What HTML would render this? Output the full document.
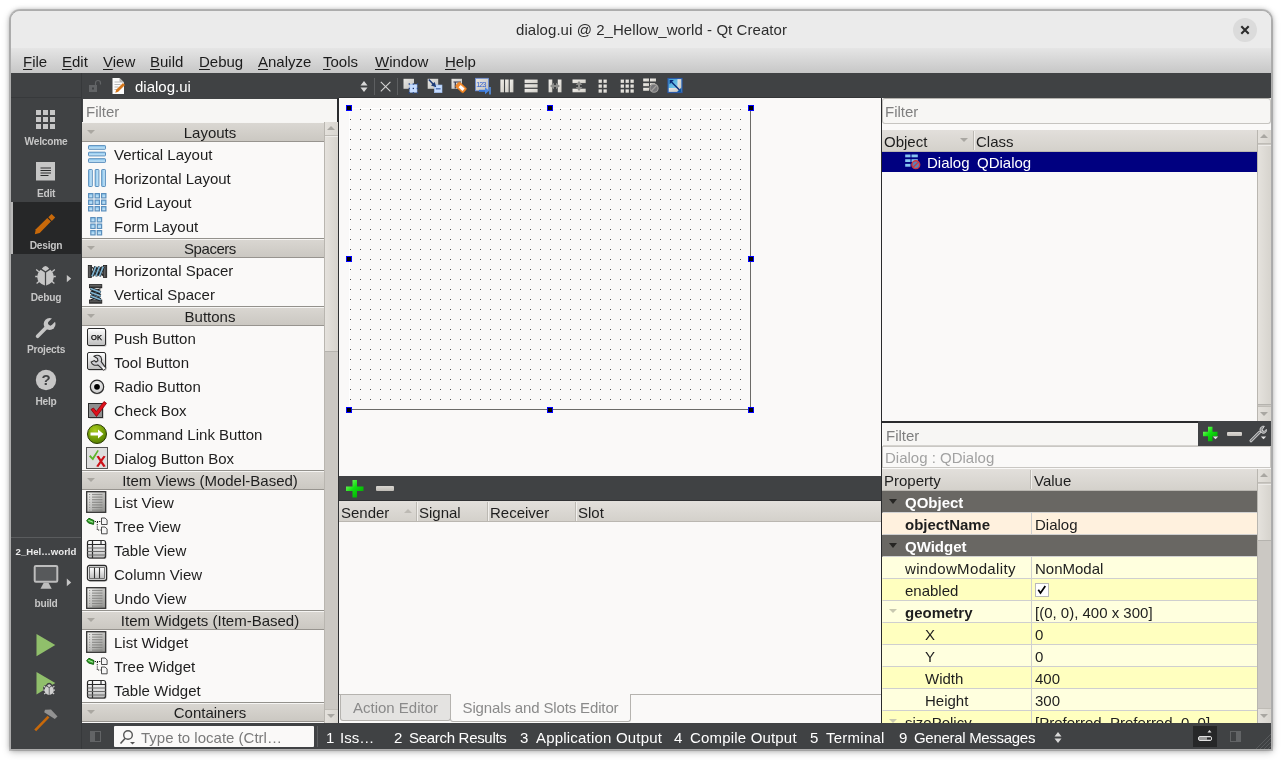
<!DOCTYPE html>
<html lang="en">
<head>
<meta charset="utf-8">
<title>dialog.ui @ 2_Hellow_world - Qt Creator</title>
<style>
*{box-sizing:border-box;margin:0;padding:0}
html,body{width:1282px;height:760px;overflow:hidden;background:#fff}
body{position:relative;will-change:transform;font-family:"Liberation Sans",sans-serif;font-size:15px;color:#1e1e1e;line-height:1}
.abs{position:absolute}
#frame{position:absolute;left:10px;top:10px;width:1262px;height:740px;border:1px solid #acacac;border-radius:10px 10px 0 0;background:#ebebeb;box-shadow:0 0 0 1px rgba(0,0,0,.16),0 2px 9px rgba(0,0,0,.22),0 0 5px rgba(0,0,0,.28)}
#title{position:absolute;left:11px;top:11px;width:1260px;height:37px;border-radius:9px 9px 0 0;background:#ebebeb;text-align:center;line-height:38px;font-size:15px;color:#2d2d2d;letter-spacing:.06px;padding-left:21px}
#close{position:absolute;left:1233px;top:18px;width:24px;height:24px;border-radius:12px;background:#dbdbdb}
#menubar{position:absolute;left:11px;top:48px;width:1260px;height:25px;background:linear-gradient(#e5e5e5,#dcdcdc 30%,#c7c7c7)}
#menubar span{position:absolute;top:6px;font-size:15px;color:#1c1c1c;white-space:nowrap}
#menubar u{text-decoration:underline;text-underline-offset:2px;text-decoration-thickness:1px}
#dark{position:absolute;left:11px;top:73px;width:1260px;height:676px;background:#404244}
/* mode bar */
.ml{position:absolute;left:11px;width:70px;text-align:center;font-size:10.200px;font-weight:bold;color:#c6c6c6;letter-spacing:-.25px;line-height:12px;white-space:nowrap}
.panel{position:absolute;background:#faf9f8}
.ph{color:#7f7f7f}
/* widget box */
.cat{position:absolute;left:82px;width:242px;padding-left:14px;height:20px;background:linear-gradient(#dad7d2,#cbc8c2);border-bottom:1px solid #97948f;border-top:1px solid #93918c;box-shadow:inset 0 1px 0 #f6f5f3;text-align:center;font-size:15px;line-height:19px;color:#1e1e1e}
.cat.first{border-top-color:#f6f5f3;box-shadow:none}
.cat i{position:absolute;left:5px;top:7px;width:0;height:0;border-left:4px solid transparent;border-right:4px solid transparent;border-top:4px solid #aaa7a1}
.it{position:absolute;left:114px;font-size:15px;line-height:24px;height:24px;white-space:nowrap;color:#1e1e1e}
.ic{position:absolute;left:86px;width:22px;height:22px}
.hdr{position:absolute;height:21px;background:linear-gradient(#e2dfdb,#d4d1cb);border-bottom:1px solid #bab7b1;font-size:15px;line-height:21px;white-space:nowrap;color:#1e1e1e}
.hdr span{position:absolute;top:1px}
.sbh{background:linear-gradient(90deg,#e5e2dd,#d6d3cd);border-bottom:1px solid #b5b3ae;border-top:1px solid #eceae7}
.sbb{background:linear-gradient(90deg,#e4e1dc,#d8d5cf)}
.hdr em{position:absolute;top:1px;width:1px;height:19px;background:#bcb9b3;border-right:1px solid #f1efec;box-sizing:content-box}
.sb{position:absolute;width:14px;background:#cbc8c3;border-left:1px solid #b9b6b0}
.row{position:absolute;left:882px;width:375px;border-left:1px solid transparent;height:22px;font-size:15px;line-height:21px;border-bottom:1px solid #cfcfcf;white-space:nowrap}
.row span{position:absolute;top:1px}
.row .v{left:152px}
.row em{position:absolute;left:148px;top:0;width:1px;height:21px;background:#cfcfcf}
.grp{background:#696763;color:#fff;font-weight:bold;border-bottom:1px solid #d2d2d2}
.out{position:absolute;top:728px;font-size:15px;color:#fff;white-space:nowrap;line-height:19px}
</style>
</head>
<body>
<div id="frame"></div>
<div id="title">dialog.ui @ 2_Hellow_world - Qt Creator</div>
<div id="close"><svg width="24" height="24" viewBox="0 0 24 24"><path d="M8.3 8.3l7.4 7.4M15.7 8.3l-7.4 7.4" stroke="#2b2b2b" stroke-width="2.1" fill="none"/></svg></div>
<div id="menubar">
<span style="left:12px"><u>F</u>ile</span>
<span style="left:51px"><u>E</u>dit</span>
<span style="left:92px"><u>V</u>iew</span>
<span style="left:139px"><u>B</u>uild</span>
<span style="left:188px"><u>D</u>ebug</span>
<span style="left:247px"><u>A</u>nalyze</span>
<span style="left:312px"><u>T</u>ools</span>
<span style="left:364px"><u>W</u>indow</span>
<span style="left:434px"><u>H</u>elp</span>
</div>
<div id="dark"></div>
<div class="abs" style="left:11px;top:97px;width:70px;height:1px;background:#37393b"></div>
<div class="abs" style="left:81px;top:73px;width:1px;height:676px;background:#37393b"></div>
<svg class="abs" style="left:35px;top:109px" width="22" height="22" viewBox="0 0 22 22"><rect x="1" y="1" width="5" height="5" fill="#c6c6c6"/><rect x="1" y="8" width="5" height="5" fill="#c6c6c6"/><rect x="1" y="15" width="5" height="5" fill="#c6c6c6"/><rect x="8" y="1" width="5" height="5" fill="#c6c6c6"/><rect x="8" y="8" width="5" height="5" fill="#c6c6c6"/><rect x="8" y="15" width="5" height="5" fill="#c6c6c6"/><rect x="15" y="1" width="5" height="5" fill="#c6c6c6"/><rect x="15" y="8" width="5" height="5" fill="#c6c6c6"/><rect x="15" y="15" width="5" height="5" fill="#c6c6c6"/></svg>
<div class="ml" style="top:136px;">Welcome</div>
<svg class="abs" style="left:35px;top:160px" width="22" height="22" viewBox="0 0 22 22"><rect x="1" y="2" width="19" height="18.500" fill="#c6c6c6"/><path d="M5.500 8h10.500M5.500 10.500h10.500M5.500 13h10.500M5.500 15.500h8" stroke="#2c2d2e" stroke-width="1.100"/></svg>
<div class="ml" style="top:188px;">Edit</div>
<div class="abs" style="left:11px;top:202px;width:70px;height:52px;background:#262728"></div><div class="abs" style="left:11px;top:202px;width:2px;height:52px;background:#b9b9b9"></div>
<svg class="abs" style="left:33px;top:211px" width="26" height="26" viewBox="0 0 26 26"><path d="M14.300 7.100l3.600 3.500L6.700 21.900l-4.900 1.400 1-5z" fill="#c8690a"/><path d="M15.300 6.300l3.300-3.400 3.600 3.600-3.400 3.400z" fill="#c8690a"/></svg>
<div class="ml" style="top:240px;">Design</div>
<svg class="abs" style="left:32px;top:262px" width="28" height="28" viewBox="0 0 28 28"><g stroke="#c6c6c6" stroke-width="1.300" fill="none"><path d="M4.200 7.500l2.600 2.200M3.200 14.500h2.600M4.600 21.500l2.600-2.200M22.800 7.500l-2.600 2.200M23.800 14.500h-2.600M22.400 21.500l-2.600-2.200"/></g><path d="M9.800 6.800Q13.500 1 17.200 6.800L13.500 9.200z" fill="#c6c6c6"/><path d="M12.900 10.400L8.700 7.700Q5.300 10.200 5.300 15.300Q5.300 21.300 12.900 23.400z" fill="#c6c6c6"/><path d="M14.100 10.400l4.200-2.700Q21.700 10.200 21.700 15.300Q21.700 21.300 14.100 23.400z" fill="#c6c6c6"/></svg>
<svg class="abs" style="left:66px;top:274px" width="6" height="9" viewBox="0 0 6 9"><path d="M.8 .9l4.400 3.700-4.400 3.700z" fill="#c6c6c6"/></svg>
<div class="ml" style="top:292px;">Debug</div>
<svg class="abs" style="left:32px;top:314px" width="28" height="28" viewBox="0 0 28 28"><path d="M5.600 22.200L15 12.800" stroke="#c6c6c6" stroke-width="3.700" stroke-linecap="round"/><circle cx="17.600" cy="10" r="5.900" fill="#c6c6c6"/><path d="M18.400 9.200l6 -6" stroke="#404244" stroke-width="4.600" stroke-linecap="round"/></svg>
<div class="ml" style="top:344px;">Projects</div>
<svg class="abs" style="left:35px;top:369px" width="22" height="22" viewBox="0 0 22 22"><circle cx="11" cy="11" r="10.200" fill="#c6c6c6"/><text x="11" y="16.400" text-anchor="middle" font-family="Liberation Sans, sans-serif" font-weight="bold" font-size="15" fill="#404244">?</text></svg>
<div class="ml" style="top:396px;">Help</div>
<div class="abs" style="left:11px;top:537px;width:70px;height:1px;background:#5a5c5e"></div>
<div class="ml" style="top:546px;font-size:9.600px;color:#ececec;letter-spacing:0;font-weight:bold">2_Hel…world</div>
<svg class="abs" style="left:32px;top:563px" width="28" height="28" viewBox="0 0 28 28"><rect x="2.700" y="2.900" width="22.600" height="15.800" rx="1.200" fill="#57595b" stroke="#bdbdbd" stroke-width="2"/><path d="M11.700 19.700h4.800l3.200 6.100H8.500z" fill="#bdbdbd"/></svg>
<svg class="abs" style="left:66px;top:578px" width="6" height="9" viewBox="0 0 6 9"><path d="M.8 .6l4.400 3.800-4.400 3.800z" fill="#c6c6c6"/></svg>
<div class="ml" style="top:598px;">build</div>
<svg class="abs" style="left:34px;top:632px" width="24" height="26" viewBox="0 0 24 26"><path d="M2.500 2L21.300 13 2.500 24.200z" fill="#90bf6b"/></svg>
<svg class="abs" style="left:34px;top:670px" width="26" height="28" viewBox="0 0 26 28"><path d="M2.500 2.100L21.300 13 2.500 24.400z" fill="#90bf6b"/><g transform="translate(7.600,12) scale(.56)"><path d="M9.800 6.800Q13.500 1 17.200 6.800L13.500 9.200zM12.900 10.400L8.700 7.700Q5.300 10.200 5.300 15.300Q5.300 21.300 12.900 23.400zM14.100 10.400l4.200-2.700Q21.700 10.200 21.700 15.300Q21.700 21.300 14.100 23.400z" fill="#404244" stroke="#404244" stroke-width="5"/><path d="M4.200 7.500l2.600 2.200M3.200 14.500h2.600M4.600 21.500l2.600-2.200M22.800 7.500l-2.600 2.200M23.800 14.500h-2.600M22.400 21.500l-2.600-2.200" stroke="#404244" stroke-width="5.500"/><g stroke="#d0d0d0" stroke-width="2" fill="none"><path d="M4.200 7.500l2.600 2.200M3.200 14.500h2.600M4.600 21.500l2.600-2.200M22.800 7.500l-2.600 2.200M23.800 14.500h-2.600M22.400 21.500l-2.600-2.200"/></g><path d="M9.800 6.800Q13.500 1 17.200 6.800L13.500 9.200z" fill="#d0d0d0"/><path d="M12.900 10.400L8.700 7.700Q5.300 10.200 5.300 15.300Q5.300 21.300 12.900 23.400z" fill="#d0d0d0"/><path d="M14.100 10.400l4.200-2.700Q21.700 10.200 21.700 15.300Q21.700 21.300 14.100 23.400z" fill="#d0d0d0"/></g></svg>
<svg class="abs" style="left:32px;top:706px" width="28" height="28" viewBox="0 0 28 28"><path d="M3.200 24.400L16.500 10.600" stroke="#c8690a" stroke-width="2.600"/><path d="M12.200 6.300l.8-2.600 6-.1 6.500 6.800-2.700 2.600z" fill="#929292"/></svg>

<svg class="abs" style="left:88px;top:79px" width="14" height="14" viewBox="0 0 14 14"><rect x="1" y="6" width="8" height="7" fill="#626466"/><rect x="4" y="8.500" width="2" height="2" fill="#404244"/><path d="M7.500 6V4a2.500 2.500 0 0 1 5 0v1.500" stroke="#626466" stroke-width="1.200" fill="none"/></svg>
<svg class="abs" style="left:111px;top:77px" width="16" height="18" viewBox="0 0 16 18"><path d="M1.500 1h7l4.500 4.500v11.500h-11.500z" fill="#fbfbfb"/><path d="M8.500 1l4.500 4.500h-4.500z" fill="#b5b5b5"/><path d="M3.500 5h5M3.500 7.500h6M3.500 10h4M3.500 12.500h3" stroke="#b9b9b9" stroke-width="1"/><path d="M4.300 15.800l.9-3 6.800-6.800 2 2-6.800 6.800z" fill="#d4761b"/></svg>
<div class="abs" style="left:135px;top:77px;font-size:15px;color:#fff;line-height:19px">dialog.ui</div>
<svg class="abs" style="left:360px;top:80px" width="8" height="13" viewBox="0 0 8 13"><path d="M.5 5.500l3.500-4.500 3.500 4.500zM.5 7.500l3.500 4.500 3.500-4.500z" fill="#d8d8d8"/></svg>
<div class="abs" style="left:374px;top:78px;width:1px;height:17px;background:#5d5f61"></div>
<svg class="abs" style="left:379px;top:80px" width="13" height="13" viewBox="0 0 13 13"><path d="M1.800 1.800l9.600 9.600M11.400 1.800l-9.600 9.600" stroke="#d4d4d4" stroke-width="1.100"/></svg>
<div class="abs" style="left:397px;top:78px;width:1px;height:17px;background:#5d5f61"></div>

<svg width="0" height="0" style="position:absolute"><defs><linearGradient id="gcr" x1="0" y1="0" x2="1" y2="1"><stop offset="0" stop-color="#f4f2ee"/><stop offset="1" stop-color="#cfccc5"/></linearGradient><linearGradient id="ggr" x1="0" y1="0" x2="1" y2="1"><stop offset="0" stop-color="#e9e8e5"/><stop offset="1" stop-color="#c2c1bd"/></linearGradient><linearGradient id="gadj" x1="0" y1="0" x2="1" y2="1"><stop offset="0" stop-color="#3aa0d8"/><stop offset="1" stop-color="#a5e0f4"/></linearGradient></defs></svg>
<svg class="abs" style="left:402px;top:76px" width="20" height="20" viewBox="0 0 20 20"><rect x="1.500" y="2.800" width="10.500" height="10" fill="url(#ggr)"/><rect x="7.800" y="8.500" width="7.200" height="7.800" fill="#c5dcff" stroke="#9ebef0" stroke-width=".6"/><rect x="10.700" y="11.800" width="1.300" height="1.300" fill="#1b2f63"/><rect x="6.6" y="7.3" width="1.400" height="1.400" fill="#2a4a8c"/><rect x="10.7" y="7.3" width="1.400" height="1.400" fill="#2a4a8c"/><rect x="14.8" y="7.3" width="1.400" height="1.400" fill="#2a4a8c"/><rect x="6.6" y="11.8" width="1.400" height="1.400" fill="#2a4a8c"/><rect x="14.8" y="11.8" width="1.400" height="1.400" fill="#2a4a8c"/><rect x="6.6" y="16.2" width="1.400" height="1.400" fill="#2a4a8c"/><rect x="10.7" y="16.2" width="1.400" height="1.400" fill="#2a4a8c"/><rect x="14.8" y="16.2" width="1.400" height="1.400" fill="#2a4a8c"/></svg>
<svg class="abs" style="left:426px;top:76px" width="20" height="20" viewBox="0 0 20 20"><rect x="1.700" y="2.800" width="10.500" height="10" fill="url(#ggr)"/><rect x="8.300" y="9" width="7.700" height="7.700" fill="#c5dcff" stroke="#9ebef0" stroke-width=".6"/><path d="M9.800 12.800h4.800" stroke="#4a6cb0" stroke-width="1.300"/><path d="M2.800 3.600l5.200 5.400" stroke="#1e3c78" stroke-width="1.500"/><path d="M10.300 11.200l-5.300-1.700 3.700-3.600z" fill="#1e3c78"/></svg>
<svg class="abs" style="left:450px;top:76px" width="20" height="20" viewBox="0 0 20 20"><rect x="1.500" y="2.800" width="10.500" height="10" fill="url(#ggr)"/><path d="M3.500 6h7.500M5.300 6v6.500" stroke="#3a3a50" stroke-width="1.200" fill="none"/><g transform="rotate(42 11.200 11.600)"><rect x="5.800" y="8.500" width="10.400" height="6.200" rx="1.500" fill="#f28a2e" stroke="#e07818" stroke-width=".6"/><rect x="9" y="10" width="5.400" height="3.200" fill="#fff"/></g></svg>
<svg class="abs" style="left:474px;top:76px" width="20" height="20" viewBox="0 0 20 20"><rect x="1.500" y="2.300" width="13" height="12.500" fill="url(#ggr)" stroke="#6a8edc" stroke-width=".8"/><text x="2.200" y="10.600" font-family="Liberation Sans, sans-serif" font-size="7" fill="#2a5ad0" letter-spacing="-.75">123</text><path d="M5 14.800h8" stroke="#3a78dc" stroke-width="2"/><path d="M11 11.300l4 3.500-4 3.500z" fill="#4a8ae8"/><path d="M16 11v7.500" stroke="#5a9af0" stroke-width="1.500"/></svg>
<svg class="abs" style="left:498px;top:76px" width="20" height="20" viewBox="0 0 20 20"><rect x="2.4" y="3.500" width="3.600" height="12.800" fill="url(#gcr)"/><rect x="7.1" y="3.500" width="3.600" height="12.800" fill="url(#gcr)"/><rect x="11.8" y="3.500" width="3.600" height="12.800" fill="url(#gcr)"/></svg>
<svg class="abs" style="left:522px;top:76px" width="20" height="20" viewBox="0 0 20 20"><rect x="2.600" y="3.6" width="13" height="3.500" fill="url(#gcr)"/><rect x="2.600" y="8.2" width="13" height="3.500" fill="url(#gcr)"/><rect x="2.600" y="12.9" width="13" height="3.500" fill="url(#gcr)"/></svg>
<svg class="abs" style="left:546px;top:76px" width="20" height="20" viewBox="0 0 20 20"><rect x="2.600" y="3.500" width="3.700" height="12.800" fill="url(#gcr)"/><rect x="11.800" y="3.500" width="3.700" height="12.800" fill="url(#gcr)"/><path d="M4 10l4-3.300v2.300h2v-2.300l4 3.300-4 3.300v-2.300h-2v2.300z" fill="#8e8e8c"/></svg>
<svg class="abs" style="left:570px;top:76px" width="20" height="20" viewBox="0 0 20 20"><rect x="2.500" y="3.500" width="13.200" height="3.600" fill="url(#gcr)"/><rect x="2.500" y="12.700" width="13.200" height="3.600" fill="url(#gcr)"/><path d="M9 5l3.300 4h-2.300v2h2.300l-3.300 4-3.300-4h2.300v-2h-2.300z" fill="#8e8e8c"/></svg>
<svg class="abs" style="left:594px;top:76px" width="20" height="20" viewBox="0 0 20 20"><rect x="4.6" y="3.6" width="3.300" height="3.300" fill="url(#gcr)"/><rect x="4.6" y="8.5" width="3.300" height="3.300" fill="url(#gcr)"/><rect x="4.6" y="13.4" width="3.300" height="3.300" fill="url(#gcr)"/><rect x="9.5" y="3.6" width="3.300" height="3.300" fill="url(#gcr)"/><rect x="9.5" y="8.5" width="3.300" height="3.300" fill="url(#gcr)"/><rect x="9.5" y="13.4" width="3.300" height="3.300" fill="url(#gcr)"/></svg>
<svg class="abs" style="left:618px;top:76px" width="20" height="20" viewBox="0 0 20 20"><rect x="2.7" y="3.6" width="3.300" height="3.300" fill="url(#gcr)"/><rect x="2.7" y="8.5" width="3.300" height="3.300" fill="url(#gcr)"/><rect x="2.7" y="13.4" width="3.300" height="3.300" fill="url(#gcr)"/><rect x="7.6" y="3.6" width="3.300" height="3.300" fill="url(#gcr)"/><rect x="7.6" y="8.5" width="3.300" height="3.300" fill="url(#gcr)"/><rect x="7.6" y="13.4" width="3.300" height="3.300" fill="url(#gcr)"/><rect x="12.5" y="3.6" width="3.300" height="3.300" fill="url(#gcr)"/><rect x="12.5" y="8.5" width="3.300" height="3.300" fill="url(#gcr)"/><rect x="12.5" y="13.4" width="3.300" height="3.300" fill="url(#gcr)"/></svg>
<svg class="abs" style="left:642px;top:76px" width="20" height="20" viewBox="0 0 20 20"><rect x="1.200" y="2.500" width="5.800" height="3" fill="url(#gcr)"/><rect x="8" y="2.500" width="6" height="3" fill="url(#gcr)"/><rect x="1.200" y="7.200" width="5.800" height="3" fill="url(#gcr)"/><rect x="1.200" y="11.800" width="5.800" height="3" fill="url(#gcr)"/><rect x="8" y="7.200" width="5" height="2" fill="url(#gcr)"/><circle cx="12" cy="12.200" r="4.100" fill="#77777a" stroke="#a5a3a0" stroke-width="1.100"/><path d="M9.300 15l5.400-5.600" stroke="#a5a3a0" stroke-width="1.100"/></svg>
<svg class="abs" style="left:666px;top:76px" width="20" height="20" viewBox="0 0 20 20"><rect x="2" y="2.500" width="14" height="14" fill="url(#gadj)"/><rect x="11.500" y="3" width="4" height="13" fill="url(#ggr)"/><rect x="2.500" y="12" width="13" height="4" fill="url(#ggr)"/><rect x="2" y="2.500" width="14" height="14" fill="none" stroke="#2c5aa8" stroke-width="1.200"/><path d="M5.500 6l8 8" stroke="#0a2a78" stroke-width="1.400"/><path d="M3.600 4.100h4.200l-4.200 4.200z" fill="#0a2a78"/><path d="M15.400 15.900h-4.400l4.400-4.400z" fill="#0a58a8"/></svg>

<svg width="0" height="0" style="position:absolute"><defs>
<linearGradient id="gb" x1="0" y1="0" x2="0" y2="1"><stop offset="0" stop-color="#86c4ee"/><stop offset="1" stop-color="#d4ecfa"/></linearGradient>
<linearGradient id="gbh" x1="0" y1="0" x2="1" y2="0"><stop offset="0" stop-color="#86c4ee"/><stop offset="1" stop-color="#d4ecfa"/></linearGradient>
<linearGradient id="gbtn" x1="0" y1="0" x2="0" y2="1"><stop offset="0" stop-color="#ffffff"/><stop offset="1" stop-color="#bdbdbd"/></linearGradient>
<linearGradient id="glist" x1="0" y1="0" x2="1" y2="1"><stop offset="0" stop-color="#f4f4f2"/><stop offset="1" stop-color="#8d8d8a"/></linearGradient>
<linearGradient id="gdark" x1="0" y1="0" x2="0" y2="1"><stop offset="0" stop-color="#777"/><stop offset="1" stop-color="#2a2a2a"/></linearGradient>
<linearGradient id="gdarkh" x1="0" y1="0" x2="1" y2="0"><stop offset="0" stop-color="#777"/><stop offset="1" stop-color="#2a2a2a"/></linearGradient>
<radialGradient id="ggreen" cx=".4" cy=".3" r=".8"><stop offset="0" stop-color="#a9cc1e"/><stop offset=".6" stop-color="#6f9a06"/><stop offset="1" stop-color="#4a6f02"/></radialGradient>
<radialGradient id="gradio" cx=".5" cy=".4" r=".7"><stop offset="0" stop-color="#ffffff"/><stop offset="1" stop-color="#b8b8b8"/></radialGradient>
</defs></svg>
<div class="panel" style="left:83px;top:99px;width:254px;height:23px;background:#f7f6f4"></div><div class="panel" style="left:82px;top:122px;width:256px;height:602px"></div>
<div class="abs ph" style="left:86px;top:103px;font-size:15px;line-height:18px">Filter</div>
<div class="cat first" style="top:122px"><i></i>Layouts</div>
<svg class="ic" style="top:143px" viewBox="0 0 22 22"><rect x="2.5" y="2.6" width="17" height="3.700" rx=".6" fill="url(#gb)" stroke="#5b8fbd" stroke-width="1"/><rect x="2.5" y="9.2" width="17" height="3.700" rx=".6" fill="url(#gb)" stroke="#5b8fbd" stroke-width="1"/><rect x="2.5" y="15.7" width="17" height="3.700" rx=".6" fill="url(#gb)" stroke="#5b8fbd" stroke-width="1"/></svg>
<div class="it" style="top:143px">Vertical Layout</div>
<svg class="ic" style="top:167px" viewBox="0 0 22 22"><rect x="2.6" y="2.500" width="3.700" height="17" rx=".6" fill="url(#gbh)" stroke="#5b8fbd" stroke-width="1"/><rect x="9.2" y="2.500" width="3.700" height="17" rx=".6" fill="url(#gbh)" stroke="#5b8fbd" stroke-width="1"/><rect x="15.7" y="2.500" width="3.700" height="17" rx=".6" fill="url(#gbh)" stroke="#5b8fbd" stroke-width="1"/></svg>
<div class="it" style="top:167px">Horizontal Layout</div>
<svg class="ic" style="top:191px" viewBox="0 0 22 22"><rect x="2.6" y="2.6" width="4.300" height="4.300" fill="url(#gb)" stroke="#5b8fbd" stroke-width="1.200"/><rect x="2.6" y="9.1" width="4.300" height="4.300" fill="url(#gb)" stroke="#5b8fbd" stroke-width="1.200"/><rect x="2.6" y="15.6" width="4.300" height="4.300" fill="url(#gb)" stroke="#5b8fbd" stroke-width="1.200"/><rect x="9.1" y="2.6" width="4.300" height="4.300" fill="url(#gb)" stroke="#5b8fbd" stroke-width="1.200"/><rect x="9.1" y="9.1" width="4.300" height="4.300" fill="url(#gb)" stroke="#5b8fbd" stroke-width="1.200"/><rect x="9.1" y="15.6" width="4.300" height="4.300" fill="url(#gb)" stroke="#5b8fbd" stroke-width="1.200"/><rect x="15.6" y="2.6" width="4.300" height="4.300" fill="url(#gb)" stroke="#5b8fbd" stroke-width="1.200"/><rect x="15.6" y="9.1" width="4.300" height="4.300" fill="url(#gb)" stroke="#5b8fbd" stroke-width="1.200"/><rect x="15.6" y="15.6" width="4.300" height="4.300" fill="url(#gb)" stroke="#5b8fbd" stroke-width="1.200"/></svg>
<div class="it" style="top:191px">Grid Layout</div>
<svg class="ic" style="top:215px" viewBox="0 0 22 22"><rect x="4.8" y="2.6" width="4.300" height="4.300" fill="url(#gb)" stroke="#5b8fbd" stroke-width="1.200"/><rect x="4.8" y="9.1" width="4.300" height="4.300" fill="url(#gb)" stroke="#5b8fbd" stroke-width="1.200"/><rect x="4.8" y="15.6" width="4.300" height="4.300" fill="url(#gb)" stroke="#5b8fbd" stroke-width="1.200"/><rect x="11.3" y="2.6" width="4.300" height="4.300" fill="url(#gb)" stroke="#5b8fbd" stroke-width="1.200"/><rect x="11.3" y="9.1" width="4.300" height="4.300" fill="url(#gb)" stroke="#5b8fbd" stroke-width="1.200"/><rect x="11.3" y="15.6" width="4.300" height="4.300" fill="url(#gb)" stroke="#5b8fbd" stroke-width="1.200"/></svg>
<div class="it" style="top:215px">Form Layout</div>
<div class="cat" style="top:238px"><i></i><span style="letter-spacing:-.45px">Spacers</span></div>
<svg class="ic" style="top:259px" viewBox="0 0 22 22"><rect x="2.300" y="6.400" width="3.200" height="12" fill="url(#gdarkh)" stroke="#1c1c1c" stroke-width=".8"/><rect x="17.500" y="6.400" width="3.200" height="12" fill="url(#gdarkh)" stroke="#1c1c1c" stroke-width=".8"/><path d="M6.500 8l3.500 9M10 8l3.500 9M13.500 8l3.500 9" stroke="#1b1b1b" stroke-width="1.100" fill="none"/><path d="M6 17.200l3.800-9.600M9.700 17.200l3.800-9.600M13.400 17.200l3.800-9.600" stroke="#15191c" stroke-width="3.200" fill="none"/><path d="M6 17.200l3.800-9.600M9.700 17.200l3.800-9.600M13.400 17.200l3.800-9.600" stroke="#7eb2cf" stroke-width="1.700" fill="none"/></svg>
<div class="it" style="top:259px">Horizontal Spacer</div>
<svg class="ic" style="top:283px" viewBox="0 0 22 22"><rect x="3.400" y="1.600" width="12.400" height="3.200" fill="url(#gdark)" stroke="#1c1c1c" stroke-width=".8"/><rect x="3.400" y="17" width="12.400" height="3.200" fill="url(#gdark)" stroke="#1c1c1c" stroke-width=".8"/><path d="M14.500 5.800l-10 3.700M14.500 9.500l-10 3.700M14.500 13.200l-10 3.700" stroke="#1b1b1b" stroke-width="1.100" fill="none"/><path d="M4.500 5.500l10.200 3.900M4.500 9.200l10.200 3.900M4.500 12.900l10.200 3.900" stroke="#15191c" stroke-width="3.200" fill="none"/><path d="M4.500 5.500l10.200 3.900M4.500 9.200l10.200 3.900M4.500 12.900l10.200 3.900" stroke="#7eb2cf" stroke-width="1.700" fill="none"/></svg>
<div class="it" style="top:283px">Vertical Spacer</div>
<div class="cat" style="top:306px"><i></i>Buttons</div>
<svg class="ic" style="top:327px" viewBox="0 0 22 22"><rect x="2.500" y="2.500" width="18" height="17" rx="1.500" fill="#777" opacity=".5"/><rect x="1.500" y="1.500" width="18" height="17" rx="1.500" fill="url(#gbtn)" stroke="#2b2b2b" stroke-width="1"/><text x="10.500" y="12.700" text-anchor="middle" font-family="Liberation Sans, sans-serif" font-size="6.600" fill="#000" stroke="#000" stroke-width=".25" textLength="10.800" lengthAdjust="spacingAndGlyphs">OK</text></svg>
<div class="it" style="top:327px">Push Button</div>
<svg class="ic" style="top:351px" viewBox="0 0 22 22"><rect x="2.500" y="2.500" width="18" height="17" rx="1.500" fill="#777" opacity=".5"/><rect x="1.500" y="1.500" width="18" height="17" rx="1.500" fill="url(#gbtn)" stroke="#2b2b2b" stroke-width="1"/><path d="M8 5.200C11.500 3 15.300 4.800 15.600 8.200c.2 1.300-.4 2.400-.4 2.400l4.600 6.300-2.200 2.200-5.800-5.200c-2.700 1-5.700-.1-6.600-2.800l3.100-1.500 1.700 1.400 1.900-1.200-.4-2.300z" fill="#cfcfd3" stroke="#2e2e2e" stroke-width="1.100"/><path d="M15.500 15.200l4.300 1.700-2.200 2.200z" fill="#fff"/></svg>
<div class="it" style="top:351px">Tool Button</div>
<svg class="ic" style="top:375px" viewBox="0 0 22 22"><circle cx="11" cy="12.600" r="7" fill="#999" opacity=".5"/><circle cx="11" cy="11.800" r="6.700" fill="url(#gradio)" stroke="#2b2b2b" stroke-width="1.200"/><circle cx="11" cy="11.800" r="2.900" fill="#000"/></svg>
<div class="it" style="top:375px">Radio Button</div>
<svg class="ic" style="top:399px" viewBox="0 0 22 22"><rect x="3.500" y="5.500" width="14" height="14" fill="#666" opacity=".5"/><rect x="2.500" y="4.500" width="14" height="14" fill="#8e8e8e" stroke="#2b2b2b" stroke-width="1"/><path d="M5 10.500l2.500-1.500 2.800 3.500L18 2.500l2.500 1.800L10.500 17.500z" fill="#e0101a" stroke="#8a0008" stroke-width=".8"/></svg>
<div class="it" style="top:399px">Check Box</div>
<svg class="ic" style="top:423px" viewBox="0 0 22 22"><circle cx="11" cy="11" r="9.500" fill="url(#ggreen)" stroke="#2c3d05" stroke-width="1"/><path d="M4.500 9.500h7.500V6.500l5.500 4.500-5.500 4.500v-3H4.500z" fill="#fff"/></svg>
<div class="it" style="top:423px">Command Link Button</div>
<svg class="ic" style="top:447px" viewBox="0 0 22 22"><rect x=".5" y=".5" width="21" height="21" fill="#dedede" stroke="#555" stroke-width="1"/><path d="M3 9.500l1.500-1.500 2 2.500L11.500 3l1.300.8L7 13.500z" fill="#5db52d"/><path d="M10.500 9.500l2.200-.8 2.300 3.600 2.600-3.600 2 .8-3.400 4.700 3.500 5-2.300.8-2.500-3.800-2.600 3.800-2.100-.8 3.500-5z" fill="#cc1018"/></svg>
<div class="it" style="top:447px">Dialog Button Box</div>
<div class="cat" style="top:470px"><i></i>Item Views (Model-Based)</div>
<svg class="ic" style="top:491px" viewBox="0 0 22 22"><rect x=".7" y=".7" width="19" height="20.600" fill="url(#glist)" stroke="#333" stroke-width="1.300"/><path d="M3 3.5h1.200" stroke="#9a9a98" stroke-width="1"/><path d="M6 3.5h10.500" stroke="#7b7b79" stroke-width="1.200" opacity=".75"/><path d="M3 6.1h1.200" stroke="#9a9a98" stroke-width="1"/><path d="M6 6.1h10.500" stroke="#7b7b79" stroke-width="1.200" opacity=".75"/><path d="M3 8.7h1.200" stroke="#9a9a98" stroke-width="1"/><path d="M6 8.7h10.500" stroke="#7b7b79" stroke-width="1.200" opacity=".75"/><path d="M3 11.3h1.200" stroke="#9a9a98" stroke-width="1"/><path d="M6 11.3h10.500" stroke="#7b7b79" stroke-width="1.200" opacity=".75"/><path d="M3 13.9h1.200" stroke="#9a9a98" stroke-width="1"/><path d="M6 13.9h10.500" stroke="#7b7b79" stroke-width="1.200" opacity=".75"/><path d="M3 16.5h1.200" stroke="#9a9a98" stroke-width="1"/><path d="M6 16.5h10.500" stroke="#7b7b79" stroke-width="1.200" opacity=".75"/><path d="M3 19.1h1.200" stroke="#9a9a98" stroke-width="1"/><path d="M6 19.1h10.500" stroke="#7b7b79" stroke-width="1.200" opacity=".75"/></svg>
<div class="it" style="top:491px">List View</div>
<svg class="ic" style="top:515px" viewBox="0 0 22 22"><path d="M.6 5.600L3 3.300l5 2.300-.5 3.800-5-1.400z" fill="#2fa324" stroke="#0a560a" stroke-width=".9"/><path d="M2.300 5.300l4.600 1.900" stroke="#c9efc0" stroke-width=".9"/><path d="M8.800 6.500h6M11.300 7v8h3.500" stroke="#111" stroke-width="1.100" stroke-dasharray="1.100 1.100" fill="none"/><path d="M15.500 3h3.600l2 2v4.500h-5.600z" fill="#f6f6f6" stroke="#3a3a3a" stroke-width=".9"/><path d="M15.500 12h3.600l2 2v4.800h-5.600z" fill="#f6f6f6" stroke="#3a3a3a" stroke-width=".9"/></svg>
<div class="it" style="top:515px">Tree View</div>
<svg class="ic" style="top:539px" viewBox="0 0 22 22"><rect x="2.500" y="2.500" width="18" height="17.500" rx="2" fill="#666" opacity=".5"/><rect x="1.500" y="1.500" width="18" height="17.500" rx="2" fill="url(#gbtn)" stroke="#2b2b2b" stroke-width="1.200"/><path d="M6.500 1.500v17.500M15 1.500v4M1.500 5.500h18" stroke="#2b2b2b" stroke-width="1.200"/><path d="M1.500 9h18M1.500 12.500h18M1.500 16h18" stroke="#6a6a6a" stroke-width="1"/></svg>
<div class="it" style="top:539px">Table View</div>
<svg class="ic" style="top:563px" viewBox="0 0 22 22"><rect x="2.500" y="3.500" width="19" height="15" rx="2" fill="#666" opacity=".45"/><rect x="1.500" y="2.500" width="19" height="15" rx="2" fill="#fff" stroke="#2b2b2b" stroke-width="1.300"/><rect x="3.500" y="4.500" width="15" height="11" fill="url(#gbtn)"/><path d="M8.500 4.500v11M13.500 4.500v11" stroke="#333" stroke-width="1.100"/><rect x="3.500" y="4.500" width="15" height="11" fill="none" stroke="#555" stroke-width=".8"/></svg>
<div class="it" style="top:563px">Column View</div>
<svg class="ic" style="top:587px" viewBox="0 0 22 22"><rect x=".7" y=".7" width="19" height="20.600" fill="url(#glist)" stroke="#333" stroke-width="1.300"/><path d="M3 3.5h1.200" stroke="#9a9a98" stroke-width="1"/><path d="M6 3.5h10.500" stroke="#7b7b79" stroke-width="1.200" opacity=".75"/><path d="M3 6.1h1.200" stroke="#9a9a98" stroke-width="1"/><path d="M6 6.1h10.500" stroke="#7b7b79" stroke-width="1.200" opacity=".75"/><path d="M3 8.7h1.200" stroke="#9a9a98" stroke-width="1"/><path d="M6 8.7h10.500" stroke="#7b7b79" stroke-width="1.200" opacity=".75"/><path d="M3 11.3h1.200" stroke="#9a9a98" stroke-width="1"/><path d="M6 11.3h10.500" stroke="#7b7b79" stroke-width="1.200" opacity=".75"/><path d="M3 13.9h1.200" stroke="#9a9a98" stroke-width="1"/><path d="M6 13.9h10.500" stroke="#7b7b79" stroke-width="1.200" opacity=".75"/><path d="M3 16.5h1.200" stroke="#9a9a98" stroke-width="1"/><path d="M6 16.5h10.500" stroke="#7b7b79" stroke-width="1.200" opacity=".75"/><path d="M3 19.1h1.200" stroke="#9a9a98" stroke-width="1"/><path d="M6 19.1h10.500" stroke="#7b7b79" stroke-width="1.200" opacity=".75"/></svg>
<div class="it" style="top:587px">Undo View</div>
<div class="cat" style="top:610px"><i></i>Item Widgets (Item-Based)</div>
<svg class="ic" style="top:631px" viewBox="0 0 22 22"><rect x=".7" y=".7" width="19" height="20.600" fill="url(#glist)" stroke="#333" stroke-width="1.300"/><path d="M3 3.5h1.200" stroke="#9a9a98" stroke-width="1"/><path d="M6 3.5h10.500" stroke="#7b7b79" stroke-width="1.200" opacity=".75"/><path d="M3 6.1h1.200" stroke="#9a9a98" stroke-width="1"/><path d="M6 6.1h10.500" stroke="#7b7b79" stroke-width="1.200" opacity=".75"/><path d="M3 8.7h1.200" stroke="#9a9a98" stroke-width="1"/><path d="M6 8.7h10.500" stroke="#7b7b79" stroke-width="1.200" opacity=".75"/><path d="M3 11.3h1.200" stroke="#9a9a98" stroke-width="1"/><path d="M6 11.3h10.500" stroke="#7b7b79" stroke-width="1.200" opacity=".75"/><path d="M3 13.9h1.200" stroke="#9a9a98" stroke-width="1"/><path d="M6 13.9h10.500" stroke="#7b7b79" stroke-width="1.200" opacity=".75"/><path d="M3 16.5h1.200" stroke="#9a9a98" stroke-width="1"/><path d="M6 16.5h10.500" stroke="#7b7b79" stroke-width="1.200" opacity=".75"/><path d="M3 19.1h1.200" stroke="#9a9a98" stroke-width="1"/><path d="M6 19.1h10.500" stroke="#7b7b79" stroke-width="1.200" opacity=".75"/></svg>
<div class="it" style="top:631px">List Widget</div>
<svg class="ic" style="top:655px" viewBox="0 0 22 22"><path d="M.6 5.600L3 3.300l5 2.300-.5 3.800-5-1.400z" fill="#2fa324" stroke="#0a560a" stroke-width=".9"/><path d="M2.300 5.300l4.600 1.900" stroke="#c9efc0" stroke-width=".9"/><path d="M8.800 6.500h6M11.300 7v8h3.500" stroke="#111" stroke-width="1.100" stroke-dasharray="1.100 1.100" fill="none"/><path d="M15.500 3h3.600l2 2v4.500h-5.600z" fill="#f6f6f6" stroke="#3a3a3a" stroke-width=".9"/><path d="M15.500 12h3.600l2 2v4.800h-5.600z" fill="#f6f6f6" stroke="#3a3a3a" stroke-width=".9"/></svg>
<div class="it" style="top:655px">Tree Widget</div>
<svg class="ic" style="top:679px" viewBox="0 0 22 22"><rect x="2.500" y="2.500" width="18" height="17.500" rx="2" fill="#666" opacity=".5"/><rect x="1.500" y="1.500" width="18" height="17.500" rx="2" fill="url(#gbtn)" stroke="#2b2b2b" stroke-width="1.200"/><path d="M6.500 1.500v17.500M15 1.500v4M1.500 5.500h18" stroke="#2b2b2b" stroke-width="1.200"/><path d="M1.500 9h18M1.500 12.500h18M1.500 16h18" stroke="#6a6a6a" stroke-width="1"/></svg>
<div class="it" style="top:679px">Table Widget</div>
<div class="cat" style="top:702px"><i></i>Containers</div>
<div class="sb" style="left:324px;top:122px;height:601px;width:14px"></div>
<div class="abs sbh" style="left:325px;top:136px;width:13px;height:216px"></div>
<div class="abs sbb" style="left:325px;top:122px;width:13px;height:14px;border-bottom:1px solid #bfbcb6"></div>
<div class="abs sbb" style="left:325px;top:709px;width:13px;height:14px;border-top:1px solid #bfbcb6"></div>
<i class="abs" style="left:327px;top:126px;border-left:4px solid transparent;border-right:4px solid transparent;border-bottom:4px solid #a9a7a2"></i>
<i class="abs" style="left:327px;top:714px;border-left:4px solid transparent;border-right:4px solid transparent;border-top:4px solid #a9a7a2"></i>

<div class="abs" style="left:339px;top:97px;width:542px;height:1px;background:#343537"></div>
<div class="abs" style="left:337px;top:98px;width:2px;height:24px;background:#2a2b2d"></div><div class="abs" style="left:338px;top:122px;width:1px;height:602px;background:#2e2f31"></div><div class="abs" style="left:339px;top:476px;width:542px;height:25px;background:#404244;border-bottom:1px solid #303133"></div>
<div class="abs" style="left:881px;top:98px;width:1px;height:626px;background:#2a2b2d"></div>
<div class="panel" style="left:339px;top:98px;width:542px;height:378px"></div>
<svg class="abs" style="left:349px;top:108px" width="403" height="303" viewBox="0 0 403 303"><defs><pattern id="dots" x="1" y="1" width="10" height="10" patternUnits="userSpaceOnUse"><rect x="0" y="0" width="1" height="1" fill="#555"/></pattern></defs><rect x="1" y="1" width="400" height="300" fill="url(#dots)"/><path d="M0.500 301V.5H401" stroke="#ffffff" stroke-width="1" fill="none"/><path d="M401.500 0v301.500H0" stroke="#6b6a67" stroke-width="1" fill="none"/></svg>
<div class="abs" style="left:346px;top:105px;width:6px;height:6px;background:#000;border:1px solid #0000ff"></div>
<div class="abs" style="left:547px;top:105px;width:6px;height:6px;background:#000;border:1px solid #0000ff"></div>
<div class="abs" style="left:748px;top:105px;width:6px;height:6px;background:#000;border:1px solid #0000ff"></div>
<div class="abs" style="left:346px;top:256px;width:6px;height:6px;background:#000;border:1px solid #0000ff"></div>
<div class="abs" style="left:748px;top:256px;width:6px;height:6px;background:#000;border:1px solid #0000ff"></div>
<div class="abs" style="left:346px;top:407px;width:6px;height:6px;background:#000;border:1px solid #0000ff"></div>
<div class="abs" style="left:547px;top:407px;width:6px;height:6px;background:#000;border:1px solid #0000ff"></div>
<div class="abs" style="left:748px;top:407px;width:6px;height:6px;background:#000;border:1px solid #0000ff"></div>
<svg class="abs" style="left:345px;top:479px" width="20" height="20" viewBox="0 0 20 20"><defs><linearGradient id="gpl" x1="0" y1="0" x2="1" y2="1"><stop offset="0" stop-color="#9bff78"/><stop offset=".45" stop-color="#10e010"/><stop offset="1" stop-color="#009a00"/></linearGradient></defs><path d="M7.500 1h4.500v6.500h6.500v4.500h-6.500v6.500h-4.500v-6.500h-6.500v-4.500h6.500z" fill="url(#gpl)"/></svg>
<div class="abs" style="left:376px;top:486px;width:18px;height:5px;background:linear-gradient(#d9d6d1,#bfbcb6);border-radius:1px"></div>
<div class="hdr" style="left:339px;top:501px;width:542px"><span style="left:2px">Sender</span><span style="left:80px">Signal</span><span style="left:151px">Receiver</span><span style="left:239px">Slot</span><em style="left:77px"></em><em style="left:148px"></em><em style="left:236px"></em><i class="abs" style="left:65px;top:8px;border-left:4px solid transparent;border-right:4px solid transparent;border-bottom:4px solid #bdbab4"></i></div>
<div class="panel" style="left:339px;top:522px;width:542px;height:202px"></div>
<div class="abs" style="left:339px;top:694px;width:542px;height:1px;background:#b5b3af"></div>
<div class="abs ph" style="left:340px;top:695px;width:111px;height:26px;background:#e4e3e1;border:1px solid #b5b3af;border-top:none;border-radius:0 0 3px 3px;text-align:center;line-height:25px;color:#8a8a8a">Action Editor</div>
<div class="abs ph" style="left:450px;top:694px;width:181px;height:28px;background:#faf9f8;border:1px solid #b5b3af;border-top:none;border-radius:0 0 3px 3px;text-align:center;line-height:28px;color:#8a8a8a;letter-spacing:-.14px">Signals and Slots Editor</div>

<div class="panel" style="left:882px;top:98px;width:389px;height:323px"></div>
<div class="abs" style="left:882px;top:98px;width:389px;height:26px;border:1px solid #c6c4c0;border-top-color:#b4b2ae;border-radius:3px;background:#f7f6f4"></div>
<div class="abs ph" style="left:885px;top:103px;line-height:18px">Filter</div>
<div class="hdr" style="left:882px;top:130px;width:375px;height:22px"><span style="left:2px">Object</span><span style="left:94px">Class</span><em style="left:91px"></em><i class="abs" style="left:78px;top:8px;border-left:4px solid transparent;border-right:4px solid transparent;border-top:4px solid #a9a7a2"></i></div>
<div class="abs" style="left:882px;top:152px;width:375px;height:20px;background:#000080;color:#fff;line-height:22px"><span class="abs" style="left:45px">Dialog</span><span class="abs" style="left:95px">QDialog</span></div>
<svg class="abs" style="left:904px;top:153px" width="18" height="18" viewBox="0 0 18 18"><g fill="#86c4f0"><rect x="1.200" y="1.500" width="5.300" height="2.800"/><rect x="7.500" y="1.500" width="6.300" height="2.800"/><rect x="1.200" y="6.200" width="5.300" height="2.800"/><rect x="7.500" y="6.200" width="6.300" height="2.800"/><rect x="1.200" y="10.900" width="5.300" height="2.800"/></g><circle cx="11.800" cy="11.700" r="3.900" fill="#5f7fb5" stroke="#d0383c" stroke-width="1.400"/><path d="M9.200 14.300l5.200-5.200" stroke="#d0383c" stroke-width="1.300"/></svg>
<div class="sb" style="left:1257px;top:130px;height:291px;width:14px"></div>
<div class="abs sbh" style="left:1258px;top:145px;width:13px;height:260px"></div>
<div class="abs sbb" style="left:1258px;top:130px;width:13px;height:14px;border-bottom:1px solid #bfbcb6"></div>
<div class="abs sbb" style="left:1258px;top:406px;width:13px;height:15px;border-top:1px solid #bfbcb6"></div>
<i class="abs" style="left:1260px;top:134px;border-left:4px solid transparent;border-right:4px solid transparent;border-bottom:4px solid #a9a7a2"></i>
<i class="abs" style="left:1260px;top:412px;border-left:4px solid transparent;border-right:4px solid transparent;border-top:4px solid #a9a7a2"></i>
<div class="abs" style="left:881px;top:421px;width:390px;height:2px;background:#2a2b2d"></div>
<div class="abs" style="left:881px;top:421px;width:2px;height:25px;background:#2a2b2d"></div>
<div class="panel" style="left:882px;top:423px;width:389px;height:301px"></div>
<div class="abs" style="left:1198px;top:421px;width:73px;height:25px;background:#404244"></div>
<div class="abs" style="left:883px;top:423px;width:315px;height:23px;background:#f7f6f4;border-bottom:1px solid #d5d3cf"></div>
<div class="abs ph" style="left:886px;top:427px;line-height:18px">Filter</div>
<svg class="abs" style="left:1200px;top:424px" width="20" height="20" viewBox="0 0 20 20"><path d="M8 2.800h4.500v5h5v4.500h-5v5h-4.500v-5h-5v-4.500h5z" fill="url(#gpl)"/><path d="M12.800 12.500h5.400l-2.700 2.800z" fill="#e4e4e4"/></svg>
<div class="abs" style="left:1227px;top:432px;width:15px;height:4px;background:linear-gradient(#dedbd6,#c4c1bb);border-radius:1px"></div>
<svg class="abs" style="left:1248px;top:424px" width="22" height="20" viewBox="0 0 22 20"><path d="M3 16.800L11.500 8.300" stroke="#d9d9d9" stroke-width="3" stroke-linecap="round"/><path d="M3 16.800L11.500 8.300" stroke="#77797b" stroke-width="1.400" stroke-linecap="round"/><path d="M16.300 2.300c-2-.6-4.300 1-4.300 3.300 0 .8.200 1.400.6 2l1.600 1.400c2.500 1 4.800-1.200 4.100-3.600l-2 2-1.600-.4-.4-1.600z" fill="#8b8d8f" stroke="#dcdcdc" stroke-width=".9"/><path d="M12.800 12.500h5.400l-2.700 2.800z" fill="#e4e4e4"/></svg>
<div class="abs" style="left:882px;top:446px;width:389px;height:22px;border:1px solid #c9c7c3;background:#faf9f8"></div>
<div class="abs" style="left:885px;top:449px;line-height:18px;color:#a2a2a2">Dialog : QDialog</div>
<div class="hdr" style="left:882px;top:469px;width:375px;height:22px;z-index:2"><span style="left:2px">Property</span><span style="left:152px">Value</span><em style="left:148px"></em></div>
<div class="row grp" style="top:491px"><i class="abs" style="left:6px;top:8px;border-left:4px solid transparent;border-right:4px solid transparent;border-top:5px solid #262523"></i><span style="left:22px">QObject</span></div>
<div class="row" style="top:513px;background:#fff1de"><span style="left:22px;font-weight:bold;">objectName</span><em></em><span class="v">Dialog</span></div>
<div class="row grp" style="top:535px"><i class="abs" style="left:6px;top:8px;border-left:4px solid transparent;border-right:4px solid transparent;border-top:5px solid #262523"></i><span style="left:22px">QWidget</span></div>
<div class="row" style="top:557px;background:#ffffde"><span style="left:22px;"><span style="position:static;letter-spacing:.35px">windowModality</span></span><em></em><span class="v">NonModal</span></div>
<div class="row" style="top:579px;background:#ffffbf"><span style="left:22px;">enabled</span><em></em><svg class="abs" style="left:152px;top:4px" width="14" height="14" viewBox="0 0 14 14"><rect x=".5" y=".5" width="13" height="13" fill="#fff" stroke="#b9b9b9"/><path d="M3.300 6.800l2.200 3.200 4.800-7" stroke="#000" stroke-width="1.700" fill="none"/></svg></div>
<div class="row" style="top:601px;background:#ffffde"><i class="abs" style="left:6px;top:8px;border-left:4px solid transparent;border-right:4px solid transparent;border-top:4px solid #c8c8b0"></i><span style="left:22px;font-weight:bold;">geometry</span><em></em><span class="v">[(0, 0), 400 x 300]</span></div>
<div class="row" style="top:623px;background:#ffffbf"><span style="left:42px;">X</span><em></em><span class="v">0</span></div>
<div class="row" style="top:645px;background:#ffffde"><span style="left:42px;">Y</span><em></em><span class="v">0</span></div>
<div class="row" style="top:667px;background:#ffffbf"><span style="left:42px;">Width</span><em></em><span class="v">400</span></div>
<div class="row" style="top:689px;background:#ffffde"><span style="left:42px;">Height</span><em></em><span class="v">300</span></div>
<div class="row" style="top:711px;background:#ffffbf"><i class="abs" style="left:6px;top:8px;border-left:4px solid transparent;border-right:4px solid transparent;border-top:4px solid #c8c8b0"></i><span style="left:22px;">sizePolicy</span><em></em><span class="v">[Preferred, Preferred, 0, 0]</span></div>
<div class="sb" style="left:1257px;top:469px;height:254px;width:14px"></div>
<div class="abs sbh" style="left:1258px;top:484px;width:13px;height:57px"></div>
<div class="abs sbb" style="left:1258px;top:469px;width:13px;height:14px;border-bottom:1px solid #bfbcb6"></div>
<div class="abs sbb" style="left:1258px;top:708px;width:13px;height:15px;border-top:1px solid #bfbcb6"></div>
<i class="abs" style="left:1260px;top:473px;border-left:4px solid transparent;border-right:4px solid transparent;border-bottom:4px solid #a9a7a2"></i>
<i class="abs" style="left:1260px;top:714px;border-left:4px solid transparent;border-right:4px solid transparent;border-top:4px solid #a9a7a2"></i>

<div class="abs" style="left:82px;top:723px;width:1189px;height:26px;background:#404244"></div>
<div class="abs" style="left:90px;top:731px;width:11px;height:11px;border:1px solid #626466"><div class="abs" style="left:0;top:0;width:4px;height:9px;background:#626466"></div></div>
<div class="abs" style="left:114px;top:726px;width:200px;height:21px;background:#faf9f8;border-radius:1px"></div>
<svg class="abs" style="left:119px;top:729px" width="18" height="16" viewBox="0 0 18 16"><circle cx="9" cy="6" r="4.300" fill="none" stroke="#555" stroke-width="1.400"/><path d="M6 9.500L1.500 14.500" stroke="#555" stroke-width="1.600"/><path d="M11 13h5l-2.500 2.500z" fill="#555"/></svg>
<div class="abs ph" style="left:141px;top:728px;line-height:19px;color:#7a7a7a">Type to locate (Ctrl…</div>
<div class="abs" style="left:317px;top:726px;width:1px;height:21px;background:#5c5e60"></div>
<div class="out" style="left:326px">1</div>
<div class="out" style="left:340px">Iss…</div>
<div class="out" style="left:394px">2</div>
<div class="out" style="left:409px;letter-spacing:-0.30px">Search Results</div>
<div class="out" style="left:520px">3</div>
<div class="out" style="left:536px;letter-spacing:0.20px">Application Output</div>
<div class="out" style="left:674px">4</div>
<div class="out" style="left:690px;letter-spacing:0.18px">Compile Output</div>
<div class="out" style="left:810px">5</div>
<div class="out" style="left:826px;letter-spacing:0.25px">Terminal</div>
<div class="out" style="left:899px">9</div>
<div class="out" style="left:914px;letter-spacing:-0.30px">General Messages</div>
<svg class="abs" style="left:1054px;top:731px" width="8" height="13" viewBox="0 0 8 13"><path d="M.5 5.500l3.500-4.500 3.500 4.500zM.5 7.500l3.500 4.500 3.500-4.500z" fill="#d8d8d8"/></svg>
<div class="abs" style="left:1193px;top:726px;width:24px;height:21px;background:#262728"></div>
<svg class="abs" style="left:1193px;top:726px" width="24" height="21" viewBox="0 0 24 21"><path d="M14.500 6.500l2-2.500 2 2.500z" fill="#e0e0e0"/><rect x="5.500" y="10.500" width="13" height="4" rx="1.500" fill="#9a9a9a" stroke="#e0e0e0" stroke-width="1"/><rect x="14" y="11.500" width="4" height="2" fill="#262728"/></svg>
<div class="abs" style="left:1230px;top:731px;width:11px;height:11px;border:1px solid #626466"><div class="abs" style="right:0;top:0;width:4px;height:9px;background:#626466"></div></div>
<svg class="abs" style="left:1255px;top:733px" width="16" height="16" viewBox="0 0 16 16"><path d="M1 16L16 1M5 16L16 5M9 16l7-7M13 16l3-3" stroke="#5d5f61" stroke-width=".8"/></svg>

</body>
</html>
